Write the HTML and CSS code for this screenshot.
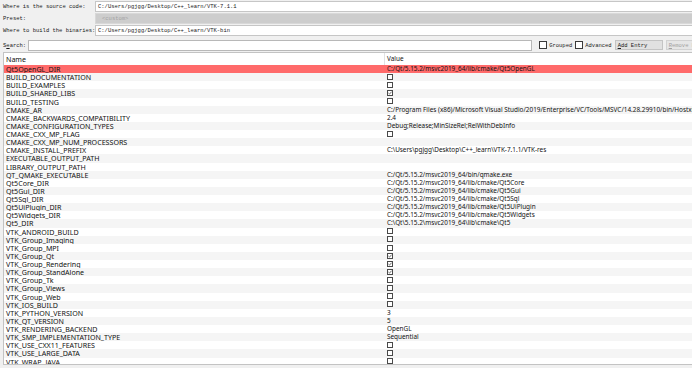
FILE: index.html
```html
<!DOCTYPE html>
<html lang="en">
<head>
    <meta charset="UTF-8">
    <title>CMake</title>
    <link rel="stylesheet" href="styles.css">
</head>
<body>
    <div class="paths">
        <div class="path-row">
            <span class="path-label">Where is the source code:</span>
            <div class="path-input">C:/Users/pgjgg/Desktop/C++_learn/VTK-7.1.1</div>
        </div>
        <div class="path-row">
            <span class="path-label">Preset:</span>
            <div class="path-input preset">&lt;custom&gt;</div>
        </div>
        <div class="path-row">
            <span class="path-label">Where to build the binaries:</span>
            <div class="path-input">C:/Users/pgjgg/Desktop/C++_learn/VTK-bin</div>
        </div>
    </div>

    <div class="search-row">
        <span class="path-label">S<u>e</u>arch:</span>
        <div class="search-input"></div>
        <label class="opt"><span class="box"></span>Grouped</label>
        <label class="opt"><span class="box"></span>Advanced</label>
        <div class="btn"><u>A</u>dd Entry</div>
        <div class="btn disabled"><u>R</u>emove Entry</div>
    </div>

    <div class="cache">
        <div class="cache-head">
            <div class="cell">Name</div>
            <div class="cell value">Value</div>
        </div>
        <div class="row new"><div class="cell">Qt5OpenGL_DIR</div><div class="cell value">C:/Qt/5.15.2/msvc2019_64/lib/cmake/Qt5OpenGL</div></div>
        <div class="row"><div class="cell">BUILD_DOCUMENTATION</div><div class="cell value"><span class="check"></span></div></div>
        <div class="row"><div class="cell">BUILD_EXAMPLES</div><div class="cell value"><span class="check"></span></div></div>
        <div class="row"><div class="cell">BUILD_SHARED_LIBS</div><div class="cell value"><span class="check on"><svg viewBox="0 0 4 4"><path d="M0.4 2 L1.5 3.1 L3.6 0.7"/></svg></span></div></div>
        <div class="row"><div class="cell">BUILD_TESTING</div><div class="cell value"><span class="check"></span></div></div>
        <div class="row"><div class="cell">CMAKE_AR</div><div class="cell value">C:/Program Files (x86)/Microsoft Visual Studio/2019/Enterprise/VC/Tools/MSVC/14.28.29910/bin/Hostx64/x64/lib.exe</div></div>
        <div class="row"><div class="cell">CMAKE_BACKWARDS_COMPATIBILITY</div><div class="cell value">2.4</div></div>
        <div class="row"><div class="cell">CMAKE_CONFIGURATION_TYPES</div><div class="cell value">Debug;Release;MinSizeRel;RelWithDebInfo</div></div>
        <div class="row"><div class="cell">CMAKE_CXX_MP_FLAG</div><div class="cell value"><span class="check"></span></div></div>
        <div class="row"><div class="cell">CMAKE_CXX_MP_NUM_PROCESSORS</div><div class="cell value"></div></div>
        <div class="row"><div class="cell">CMAKE_INSTALL_PREFIX</div><div class="cell value">C:\Users\pgjgg\Desktop\C++_learn\VTK-7.1.1/VTK-res</div></div>
        <div class="row"><div class="cell">EXECUTABLE_OUTPUT_PATH</div><div class="cell value"></div></div>
        <div class="row"><div class="cell">LIBRARY_OUTPUT_PATH</div><div class="cell value"></div></div>
        <div class="row"><div class="cell">QT_QMAKE_EXECUTABLE</div><div class="cell value">C:/Qt/5.15.2/msvc2019_64/bin/qmake.exe</div></div>
        <div class="row"><div class="cell">Qt5Core_DIR</div><div class="cell value">C:/Qt/5.15.2/msvc2019_64/lib/cmake/Qt5Core</div></div>
        <div class="row"><div class="cell">Qt5Gui_DIR</div><div class="cell value">C:/Qt/5.15.2/msvc2019_64/lib/cmake/Qt5Gui</div></div>
        <div class="row"><div class="cell">Qt5Sql_DIR</div><div class="cell value">C:/Qt/5.15.2/msvc2019_64/lib/cmake/Qt5Sql</div></div>
        <div class="row"><div class="cell">Qt5UiPlugin_DIR</div><div class="cell value">C:/Qt/5.15.2/msvc2019_64/lib/cmake/Qt5UiPlugin</div></div>
        <div class="row"><div class="cell">Qt5Widgets_DIR</div><div class="cell value">C:/Qt/5.15.2/msvc2019_64/lib/cmake/Qt5Widgets</div></div>
        <div class="row"><div class="cell">Qt5_DIR</div><div class="cell value">C:\Qt\5.15.2\msvc2019_64\lib\cmake\Qt5</div></div>
        <div class="row"><div class="cell">VTK_ANDROID_BUILD</div><div class="cell value"><span class="check"></span></div></div>
        <div class="row"><div class="cell">VTK_Group_Imaging</div><div class="cell value"><span class="check"></span></div></div>
        <div class="row"><div class="cell">VTK_Group_MPI</div><div class="cell value"><span class="check"></span></div></div>
        <div class="row"><div class="cell">VTK_Group_Qt</div><div class="cell value"><span class="check on"><svg viewBox="0 0 4 4"><path d="M0.4 2 L1.5 3.1 L3.6 0.7"/></svg></span></div></div>
        <div class="row"><div class="cell">VTK_Group_Rendering</div><div class="cell value"><span class="check on"><svg viewBox="0 0 4 4"><path d="M0.4 2 L1.5 3.1 L3.6 0.7"/></svg></span></div></div>
        <div class="row"><div class="cell">VTK_Group_StandAlone</div><div class="cell value"><span class="check on"><svg viewBox="0 0 4 4"><path d="M0.4 2 L1.5 3.1 L3.6 0.7"/></svg></span></div></div>
        <div class="row"><div class="cell">VTK_Group_Tk</div><div class="cell value"><span class="check"></span></div></div>
        <div class="row"><div class="cell">VTK_Group_Views</div><div class="cell value"><span class="check"></span></div></div>
        <div class="row"><div class="cell">VTK_Group_Web</div><div class="cell value"><span class="check"></span></div></div>
        <div class="row"><div class="cell">VTK_IOS_BUILD</div><div class="cell value"><span class="check"></span></div></div>
        <div class="row"><div class="cell">VTK_PYTHON_VERSION</div><div class="cell value">3</div></div>
        <div class="row"><div class="cell">VTK_QT_VERSION</div><div class="cell value">5</div></div>
        <div class="row"><div class="cell">VTK_RENDERING_BACKEND</div><div class="cell value">OpenGL</div></div>
        <div class="row"><div class="cell">VTK_SMP_IMPLEMENTATION_TYPE</div><div class="cell value">Sequential</div></div>
        <div class="row"><div class="cell">VTK_USE_CXX11_FEATURES</div><div class="cell value"><span class="check"></span></div></div>
        <div class="row"><div class="cell">VTK_USE_LARGE_DATA</div><div class="cell value"><span class="check"></span></div></div>
        <div class="row"><div class="cell">VTK_WRAP_JAVA</div><div class="cell value"><span class="check"></span></div></div>
    </div>
</body>
</html>
```

FILE: styles.css
```css
body {
    margin: 0;
    background-color: #f0f0f0;
    font-family: "Liberation Mono", monospace;
    font-size: 5.5px;
    color: #1a1a1a;
    overflow: hidden;
    height: 368px;
}

.paths {
    display: flex;
    flex-direction: column;
    gap: 1px;
    padding-top: 1px;
}

.path-row {
    display: grid;
    grid-template-columns: 95px 1fr;
    align-items: center;
    height: 11px;
}

.path-label {
    padding-left: 3px;
    white-space: nowrap;
    flex-shrink: 0;
}

.path-input {
    height: 11px;
    line-height: 10px;
    box-sizing: border-box;
    border: 1px solid #c6c6c6;
    border-right: none;
    background-color: #ffffff;
    padding-left: 2px;
    white-space: nowrap;
}

.path-input.preset {
    background-color: #cdcdcd;
    border-color: #d8d8d8;
    color: #a3a3a3;
    padding-left: 6px;
}

.search-row {
    display: flex;
    align-items: center;
    height: 12px;
    margin-top: 3px;
    white-space: nowrap;
}

.search-input {
    width: 504px;
    height: 11px;
    box-sizing: border-box;
    margin-left: 2px;
    border: 1px solid #b8b8b8;
    background-color: #ffffff;
    flex-shrink: 0;
}

.opt {
    display: flex;
    align-items: center;
    margin-left: 7px;
    flex-shrink: 0;
}

.opt + .opt {
    margin-left: 3px;
}

.box {
    width: 6px;
    height: 6px;
    border: 1px solid #3a3a3a;
    background-color: #ffffff;
    margin-right: 2px;
}

.btn {
    width: 48px;
    height: 10px;
    line-height: 9px;
    box-sizing: border-box;
    border: 1px solid #c4c4c4;
    background-color: #e1e1e1;
    padding-left: 2px;
    margin-left: 3px;
    flex-shrink: 0;
}

.btn.disabled {
    margin-left: 3px;
    color: #a0a0a0;
    background-color: #e6e6e6;
    border-color: #d2d2d2;
}

.cache {
    margin-top: 1px;
    margin-left: 3px;
    height: 313px;
    box-sizing: border-box;
    border: 1px solid #c3c3c3;
    border-right: none;
    background-color: #ffffff;
    overflow: hidden;
    font-family: "Noto Sans", "Open Sans", sans-serif;
    font-size: 7.1px;
    color: #111111;
}

.cache-head, .row {
    display: grid;
    grid-template-columns: 380px 1fr;
    white-space: nowrap;
}

.cache-head {
    height: 12px;
    line-height: 12px;
}

.cache-head .value {
    border-left: 1px solid #e2e2e2;
    padding-left: 2px;
    font-size: 6.4px;
}

.row {
    height: 8.14px;
    line-height: 8.14px;
}

.row:nth-child(odd) {
    background-color: #f5f5f5;
}

.row.new {
    background-color: #ff6a6a;
}

.cell {
    padding-left: 2px;
    overflow: hidden;
}

.row .value {
    padding-left: 3px;
    font-size: 6.4px;
}

.check {
    display: inline-block;
    width: 6px;
    height: 6px;
    box-sizing: border-box;
    border: 1px solid #4a4a4a;
    background-color: #ffffff;
    vertical-align: middle;
    position: relative;
    top: -0.5px;
}

.check svg {
    display: block;
    width: 4px;
    height: 4px;
}

.check svg path {
    fill: none;
    stroke: #4a4a4a;
    stroke-width: 0.8;
}
```
